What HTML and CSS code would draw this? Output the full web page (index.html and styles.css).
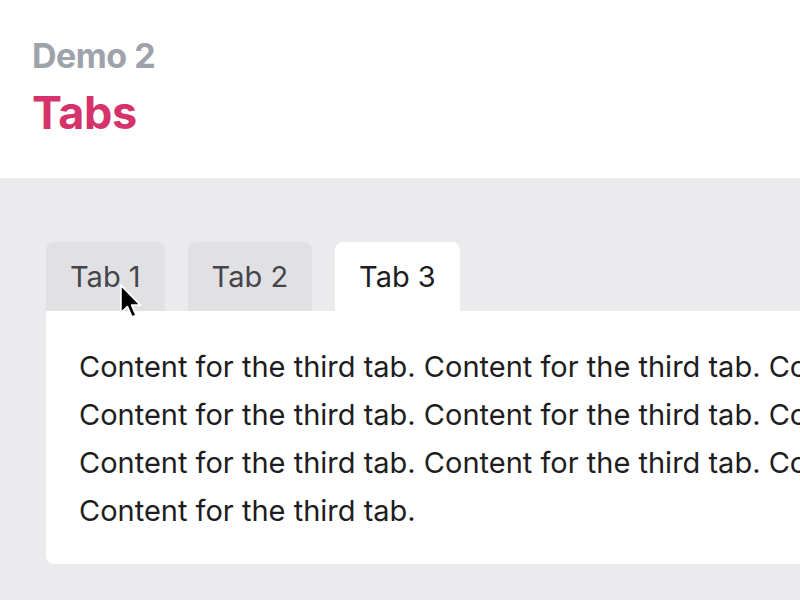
FILE: index.html
```html
<!DOCTYPE html>
<html>
<head>
<meta charset="utf-8">
<link rel="stylesheet" href="styles.css">
</head>
<body>
<header class="header">
  <div class="subtitle">Demo 2</div>
  <h1 class="title">Tabs</h1>
</header>
<main class="stage">
  <div class="tabs">
    <div class="tab-list">
      <div class="tab">Tab 1</div>
      <div class="tab">Tab 2</div>
      <div class="tab active">Tab 3</div>
    </div>
    <div class="panel">
      Content for the third tab. Content for the third tab. Content for the third tab. Content for the third tab. Content for the third tab. Content for the third tab. Content for the third tab. Content for the third tab. Content for the third tab. Content for the third tab.
    </div>
  </div>
  <svg class="cursor" width="27" height="40" viewBox="0 0 22 32">
    <path d="M1.5 1.5 L1.5 24 L6.8 19 L10.5 27.5 L14 26 L10.4 17.8 L17.5 17.8 Z" fill="#000" stroke="#fff" stroke-width="1.5" stroke-linejoin="round"/>
  </svg>
</main>
</body>
</html>
```

FILE: styles.css
```css
html, body {
  margin: 0;
  padding: 0;
}
body {
  width: 800px;
  height: 600px;
  overflow: hidden;
  font-family: "Inter", "Liberation Sans", sans-serif;
  background: #ebebed;
}
.header {
  background: #ffffff;
  height: 178px;
  padding: 36px 0 0 32px;
  box-sizing: border-box;
}
.subtitle {
  font-size: 34px;
  font-weight: 700;
  color: #9ea2ab;
  letter-spacing: -0.5px;
  line-height: 40px;
}
.title {
  margin: 10px 0 0 0;
  font-size: 45px;
  font-weight: 700;
  color: #d6336c;
  letter-spacing: -0.4px;
  line-height: 54px;
}
.stage {
  position: relative;
  padding: 64px 0 0 46px;
}
.tabs {
  width: 1150px;
}
.tab-list {
  display: flex;
  gap: 23px;
}
.tab {
  height: 69px;
  padding: 0 24px;
  display: flex;
  align-items: center;
  font-size: 29px;
  color: #45454c;
  background: #e1e1e3;
  border-radius: 8px 8px 0 0;
}
.tab.active {
  background: #ffffff;
  color: #1d1d22;
}
.panel {
  background: #ffffff;
  border-radius: 0 8px 8px 8px;
  padding: 32px 33px 29px 33px;
  font-size: 29px;
  line-height: 48px;
  color: #1d1d22;
}
.cursor {
  position: absolute;
  left: 119px;
  top: 105px;
}
```
